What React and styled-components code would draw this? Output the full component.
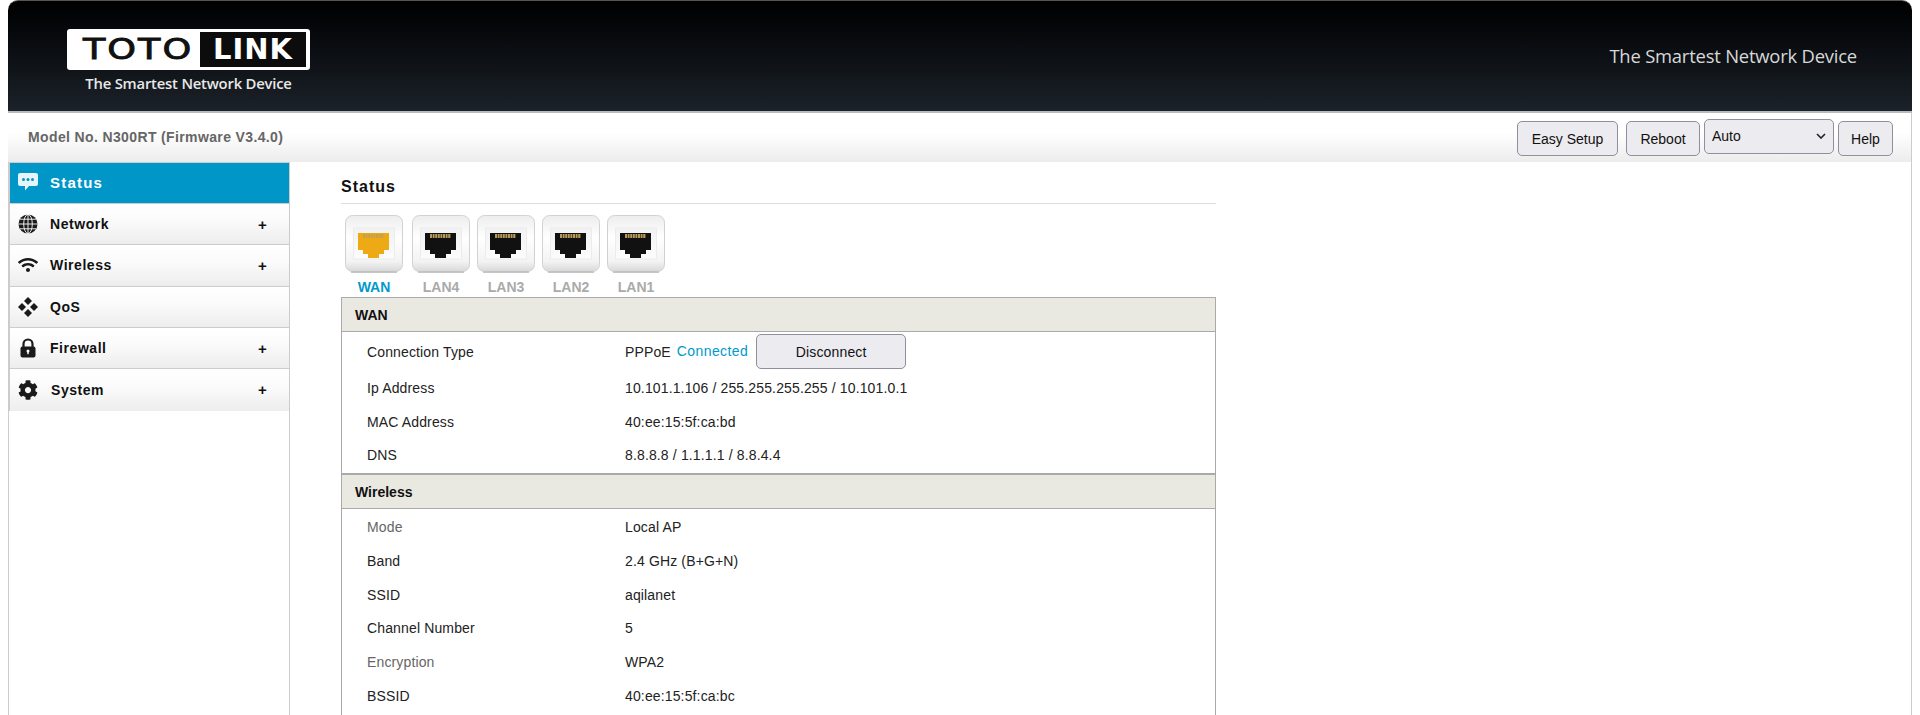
import React from "react";
import styled, { createGlobalStyle } from "styled-components";
import { FaWifi, FaCog } from "react-icons/fa";

const GlobalStyle = createGlobalStyle`
  html, body {
    margin: 0;
    padding: 0;
    height: 100%;
    overflow: hidden;
    background: #fff;
    font-family: "Liberation Sans", Arial, sans-serif;
  }
`;

const Page = styled.div`
  margin-left: 8px;
  width: 1904px;
  height: 100vh;
  overflow: hidden;
`;

const Banner = styled.header`
  height: 113px;
  box-sizing: border-box;
  display: flex;
  align-items: flex-start;
  justify-content: space-between;
  padding: 28px 55px 0 59px;
  background: linear-gradient(180deg, #000 0%, #05070a 25%, #1b2229 100%);
  border-top: 1px solid #555;
  border-bottom: 2px solid #bbb;
  border-radius: 10px 10px 0 0;
`;

const LogoWrap = styled.div`
  display: flex;
  flex-direction: column;
  align-items: center;
  width: 243px;
`;

const LogoPlate = styled.div`
  box-sizing: border-box;
  width: 243px;
  height: 41px;
  display: flex;
  align-items: center;
  justify-content: space-between;
  padding: 3px 4px 3px 16px;
  background: #fff;
  border-radius: 3px;
`;

const LogoToto = styled.span`
  display: inline-block;
  font-family: "DejaVu Sans", sans-serif;
  font-weight: 400;
  font-size: 29px;
  letter-spacing: 1.6px;
  color: #111;
  line-height: 1;
  -webkit-text-stroke: 0.9px #111;
  transform: scaleX(1.26);
  transform-origin: left center;
`;

const LogoLink = styled.span`
  width: 106px;
  height: 100%;
  display: flex;
  align-items: center;
  justify-content: center;
  font-family: "DejaVu Sans", sans-serif;
  font-weight: 700;
  font-size: 29px;
  letter-spacing: 1px;
  color: #fff;
  background: #0c0c0c;
  line-height: 1;
`;

const LogoTag = styled.div`
  margin-top: 3px;
  font-family: "Open Sans", sans-serif;
  font-weight: 600;
  font-size: 14.8px;
  letter-spacing: -0.2px;
  color: #e8e8e8;
  white-space: nowrap;
`;

const BannerTag = styled.div`
  margin-top: 14px;
  font-family: "Open Sans", sans-serif;
  font-size: 18.4px;
  letter-spacing: -0.2px;
  color: #d8d8d8;
  white-space: nowrap;
`;

const Toolbar = styled.div`
  height: 49px;
  box-sizing: border-box;
  display: flex;
  align-items: center;
  justify-content: space-between;
  padding: 0 18px 0 20px;
  background: linear-gradient(180deg, #fff 0%, #fff 40%, #ececec 100%);
  border-right: 1px solid #ccc;
`;

const ModelNo = styled.div`
  padding-bottom: 2px;
  font-size: 14px;
  font-weight: 700;
  color: #666;
  letter-spacing: 0.37px;
`;

const Actions = styled.div`
  display: flex;
  align-items: center;
  gap: 4px;
`;

const Button = styled.button`
  box-sizing: border-box;
  width: ${(props) => props.$width}px;
  height: 35px;
  margin-left: ${(props) => props.$gap || 0}px;
  padding: 0;
  font-family: "Liberation Sans", Arial, sans-serif;
  font-size: 14px;
  color: #111;
  background: #ecebf0;
  border: 1px solid #8f8f9d;
  border-radius: 5px;
  position: relative;
  top: 1px;
`;

const Select = styled.select`
  appearance: none;
  box-sizing: border-box;
  width: 130px;
  height: 35px;
  padding: 0 0 2px 7px;
  font-family: "Liberation Sans", Arial, sans-serif;
  font-size: 14px;
  color: #111;
  background-color: #ecebf0;
  background-image: url("data:image/svg+xml,%3Csvg xmlns='http://www.w3.org/2000/svg' width='10' height='6'%3E%3Cpath d='M1 1l4 4 4-4' fill='none' stroke='%23222' stroke-width='1.6'/%3E%3C/svg%3E");
  background-repeat: no-repeat;
  background-position: 111px 13px;
  border: 1px solid #8f8f9d;
  border-radius: 5px;
  position: relative;
  top: -1px;
`;

const Body = styled.div`
  display: flex;
  align-items: stretch;
  height: calc(100vh - 162px);
  border-left: 1px solid #ccc;
  border-right: 1px solid #ccc;
`;

const Sidebar = styled.nav`
  flex: 0 0 281px;
  box-sizing: border-box;
  border-right: 1px solid #ccc;
`;

const MenuRow = styled.div`
  box-sizing: border-box;
  height: ${(props) => (props.$first ? 42 : 41.33)}px;
  display: flex;
  align-items: center;
  padding-left: 8px;
  padding-bottom: ${(props) => (props.$first ? 2 : 0)}px;
  font-size: ${(props) => (props.$active ? 15 : 14)}px;
  font-weight: 700;
  letter-spacing: ${(props) => (props.$active ? 1.2 : 0.55)}px;
  color: ${(props) => (props.$active ? "#fff" : "#111")};
  background: ${(props) =>
    props.$active
      ? "#0096c8"
      : "linear-gradient(180deg, #fff 0%, #fbfbfb 40%, #ededed 100%)"};
  border-left: 1px solid #ccc;
  border-bottom: ${(props) => (props.$last ? "none" : "1px solid #ccc")};
  border-top: ${(props) => (props.$first ? "1px solid #ccc" : "none")};
`;

const MenuIcon = styled.span`
  flex: 0 0 32px;
  height: 20px;
  display: flex;
  align-items: center;
  font-size: 20px;
  color: #1a1a1a;
`;

const MenuLabel = styled.span`
  flex: 1;
  margin-left: ${(props) => props.$nudge || 0}px;
`;

const Plus = styled.span`
  width: 31px;
  font-size: 15px;
  font-weight: 700;
  letter-spacing: 0;
`;

const Main = styled.main`
  flex: 1;
  padding: 0 0 0 51px;
  min-width: 0;
`;

const Content = styled.div`
  width: 875px;
`;

const Title = styled.h1`
  margin: 0;
  height: 42px;
  box-sizing: border-box;
  padding-top: 15px;
  font-size: 16px;
  line-height: 20px;
  font-weight: 700;
  letter-spacing: 1px;
  color: #111;
  border-bottom: 1px solid #ddd;
`;

const Ports = styled.div`
  display: flex;
  padding: 11px 0 0 4px;
  height: 93px;
  box-sizing: border-box;
`;

const Port = styled.div`
  width: 58px;
  margin-right: ${(props) => props.$gap}px;
  display: flex;
  flex-direction: column;
  align-items: center;

  svg {
    flex: none;
  }
`;

const PortLabel = styled.span`
  margin-top: 6px;
  font-size: 14px;
  line-height: 16px;
  font-weight: 700;
  color: ${(props) => (props.$active ? "#0099cc" : "#aaa")};
`;

const Table = styled.section`
  min-height: 500px;
  border: 1px solid #aaa;
  border-bottom: none;
`;

const SectionHead = styled.div`
  box-sizing: border-box;
  height: ${(props) => props.$height}px;
  margin-top: ${(props) => (props.$divided ? 1 : 0)}px;
  display: flex;
  align-items: center;
  padding-left: 13px;
  font-size: 14px;
  font-weight: 700;
  color: #111;
  background: #e9e8e1;
  border-top: ${(props) => (props.$divided ? "2px solid #aaa" : "none")};
  border-bottom: 1px solid #aaa;
`;

const Row = styled.div`
  height: ${(props) => props.$height || 33.75}px;
  display: grid;
  grid-template-columns: 258px 1fr;
  align-items: center;
  padding-left: 25px;
  padding-top: ${(props) => props.$top || 0}px;
  font-size: 14px;
  letter-spacing: 0.14px;
  color: #222;
`;

const Label = styled.span`
  color: ${(props) => (props.$muted ? "#666" : "#222")};
`;

const Value = styled.span`
  display: flex;
  align-items: center;
  white-space: nowrap;
`;

const Connected = styled.span`
  margin-left: 6px;
  color: #0099cc;
  letter-spacing: 0.4px;
  position: relative;
  top: -1px;
`;

const DisconnectButton = styled.button`
  box-sizing: border-box;
  width: 150px;
  height: 35px;
  margin-left: 8px;
  padding: 0;
  font-family: "Liberation Sans", Arial, sans-serif;
  font-size: 14px;
  letter-spacing: 0.14px;
  color: #111;
  background: #ecebf0;
  border: 1px solid #8f8f9d;
  border-radius: 5px;
`;

const StatusIcon = () => (
  <svg width="20" height="18" viewBox="0 0 20 18">
    <path d="M2 0h16a2 2 0 0 1 2 2v9a2 2 0 0 1-2 2h-7l-4 4.5V13H2a2 2 0 0 1-2-2V2a2 2 0 0 1 2-2z" fill="#e6f5fb" />
    <circle cx="5.5" cy="6.5" r="1.5" fill="#0096c8" />
    <circle cx="10" cy="6.5" r="1.5" fill="#0096c8" />
    <circle cx="14.5" cy="6.5" r="1.5" fill="#0096c8" />
  </svg>
);

const GlobeIcon = () => (
  <svg width="20" height="20" viewBox="0 0 20 20">
    <circle cx="10" cy="10" r="9.5" fill="#1a1a1a" />
    <g fill="none" stroke="#fff" strokeWidth="0.9">
      <ellipse cx="10" cy="10" rx="4.3" ry="9.5" />
      <path d="M10 0v20M0.5 10h19M2 5.2h16M2 14.8h16" />
    </g>
  </svg>
);

const QosIcon = () => (
  <svg width="20" height="20" viewBox="0 0 20 20" fill="#1a1a1a">
    <path d="M10 0l4 4-4 4-4-4z" />
    <path d="M10 12l4 4-4 4-4-4z" />
    <path d="M4 6l4 4-4 4-4-4z" />
    <path d="M16 6l4 4-4 4-4-4z" />
  </svg>
);

const LockIcon = () => (
  <svg width="20" height="20" viewBox="0 0 20 20">
    <path d="M5.5 9V6a4.5 4.5 0 0 1 9 0v3" fill="none" stroke="#1a1a1a" strokeWidth="2.2" />
    <rect x="2.5" y="8.5" width="15" height="11" rx="2" fill="#1a1a1a" />
    <circle cx="10" cy="13" r="1.5" fill="#fff" />
    <rect x="9.3" y="13" width="1.4" height="3.2" fill="#fff" />
  </svg>
);

const JackIcon = ({ active }) => (
  <svg width="58" height="58" viewBox="0 0 58 58">
    <defs>
      <linearGradient id="tile" x1="0" y1="0" x2="0" y2="1">
        <stop offset="0" stopColor="#ededed" />
        <stop offset="0.4" stopColor="#fff" />
        <stop offset="0.82" stopColor="#f3f3f3" />
        <stop offset="1" stopColor="#d8d8d8" />
      </linearGradient>
      <linearGradient id="well" x1="0" y1="0" x2="0" y2="1">
        <stop offset="0" stopColor="#f2f2f2" />
        <stop offset="1" stopColor="#fcfcfc" />
      </linearGradient>
    </defs>
    <rect x="0.5" y="0.5" width="57" height="56" rx="7" fill="url(#tile)" stroke="#d2d2d2" />
    <path d="M6 57.2h46" stroke="#8a8a8a" strokeWidth="1" opacity="0.7" />
    <rect x="8.5" y="13" width="41" height="31" fill="url(#well)" stroke="#ececec" />
    <path
      d="M13 18h31v17h-5v4h-5v4H23v-4h-5v-4h-5z"
      fill={active ? "#eeaa14" : "#111"}
    />
    <path
      d="M18 21h21"
      stroke={active ? "#c9a04a" : "#b59a5a"}
      strokeWidth="4"
      strokeDasharray="2 0.6"
    />
  </svg>
);

const ports = [
  { name: "WAN", active: true, gap: 9 },
  { name: "LAN4", gap: 7 },
  { name: "LAN3", gap: 7 },
  { name: "LAN2", gap: 7 },
  { name: "LAN1", gap: 0 },
];

const menu = [
  { text: "Status", icon: <StatusIcon />, active: true },
  { text: "Network", icon: <GlobeIcon />, plus: true },
  { text: "Wireless", icon: <FaWifi />, plus: true },
  { text: "QoS", icon: <QosIcon /> },
  { text: "Firewall", icon: <LockIcon />, plus: true },
  { text: "System", icon: <FaCog />, plus: true, nudge: 1 },
];

const wireless = [
  { label: "Mode", value: "Local AP", muted: true },
  { label: "Band", value: "2.4 GHz (B+G+N)" },
  { label: "SSID", value: "aqilanet" },
  { label: "Channel Number", value: "5" },
  { label: "Encryption", value: "WPA2", muted: true },
  { label: "BSSID", value: "40:ee:15:5f:ca:bc" },
];

export default function App() {
  return (
    <Page>
      <GlobalStyle />
      <Banner>
        <LogoWrap>
          <LogoPlate>
            <LogoToto>TOTO</LogoToto>
            <LogoLink>LINK</LogoLink>
          </LogoPlate>
          <LogoTag>The Smartest Network Device</LogoTag>
        </LogoWrap>
        <BannerTag>The Smartest Network Device</BannerTag>
      </Banner>

      <Toolbar>
        <ModelNo>Model No. N300RT (Firmware V3.4.0)</ModelNo>
        <Actions>
          <Button $width={101}>Easy Setup</Button>
          <Button $width={74} $gap={4}>Reboot</Button>
          <Select defaultValue="Auto">
            <option>Auto</option>
            <option>English</option>
          </Select>
          <Button $width={55}>Help</Button>
        </Actions>
      </Toolbar>

      <Body>
        <Sidebar>
          {menu.map((item, index) => (
            <MenuRow
              key={item.text}
              $active={item.active}
              $first={index === 0}
              $last={index === menu.length - 1}
            >
              <MenuIcon>{item.icon}</MenuIcon>
              <MenuLabel $nudge={item.nudge}>{item.text}</MenuLabel>
              {item.plus && <Plus>+</Plus>}
            </MenuRow>
          ))}
        </Sidebar>

        <Main>
          <Content>
            <Title>Status</Title>
            <Ports>
              {ports.map((port) => (
                <Port key={port.name} $gap={port.gap}>
                  <JackIcon active={port.active} />
                  <PortLabel $active={port.active}>{port.name}</PortLabel>
                </Port>
              ))}
            </Ports>

            <Table>
              <SectionHead $height={34}>WAN</SectionHead>
              <Row $height={39}>
                <Label>Connection Type</Label>
                <Value>
                  PPPoE<Connected>Connected</Connected>
                  <DisconnectButton>Disconnect</DisconnectButton>
                </Value>
              </Row>
              <Row>
                <Label>Ip Address</Label>
                <Value>10.101.1.106 / 255.255.255.255 / 10.101.0.1</Value>
              </Row>
              <Row>
                <Label>MAC Address</Label>
                <Value>40:ee:15:5f:ca:bd</Value>
              </Row>
              <Row>
                <Label>DNS</Label>
                <Value>8.8.8.8 / 1.1.1.1 / 8.8.4.4</Value>
              </Row>

              <SectionHead $height={36} $divided>Wireless</SectionHead>
              {wireless.map((row, index) => (
                <Row key={row.label} $top={index === 0 ? 1 : 0}>
                  <Label $muted={row.muted}>{row.label}</Label>
                  <Value>{row.value}</Value>
                </Row>
              ))}
            </Table>
          </Content>
        </Main>
      </Body>
    </Page>
  );
}
